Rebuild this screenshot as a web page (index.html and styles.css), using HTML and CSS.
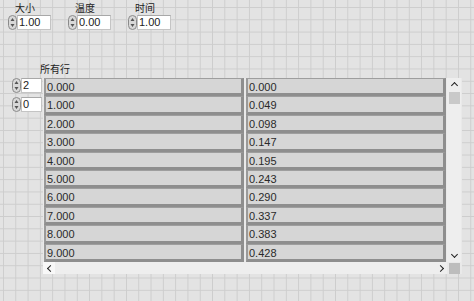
FILE: index.html
```html
<!DOCTYPE html>
<html lang="zh">
<head>
    <meta charset="UTF-8">
    <title>前面板</title>
    <link rel="stylesheet" href="styles.css">
</head>
<body>
<div class="panel">
    <div class="top">
        <div class="ctrl">
            <div class="label">大小</div>
            <div class="num"><span class="spin"><svg width="9" height="15" viewBox="0 0 9 15"><rect x="0.5" y="0.5" width="8" height="14" rx="4" fill="#d8d8d8" stroke="#8a8a8a"/><path d="M2.5 6 L4.5 3 L6.5 6 Z M2.5 9 L4.5 12 L6.5 9 Z" fill="#555"/></svg></span><span class="box">1.00</span></div>
        </div>
        <div class="ctrl">
            <div class="label">温度</div>
            <div class="num"><span class="spin"><svg width="9" height="15" viewBox="0 0 9 15"><rect x="0.5" y="0.5" width="8" height="14" rx="4" fill="#d8d8d8" stroke="#8a8a8a"/><path d="M2.5 6 L4.5 3 L6.5 6 Z M2.5 9 L4.5 12 L6.5 9 Z" fill="#555"/></svg></span><span class="box">0.00</span></div>
        </div>
        <div class="ctrl">
            <div class="label">时间</div>
            <div class="num"><span class="spin"><svg width="9" height="15" viewBox="0 0 9 15"><rect x="0.5" y="0.5" width="8" height="14" rx="4" fill="#d8d8d8" stroke="#8a8a8a"/><path d="M2.5 6 L4.5 3 L6.5 6 Z M2.5 9 L4.5 12 L6.5 9 Z" fill="#555"/></svg></span><span class="box">1.00</span></div>
        </div>
    </div>

    <div class="array-label">所有行</div>
    <div class="array">
        <div class="index">
            <div class="num"><span class="spin"><svg width="9" height="15" viewBox="0 0 9 15"><rect x="0.5" y="0.5" width="8" height="14" rx="4" fill="#d8d8d8" stroke="#8a8a8a"/><path d="M2.5 6 L4.5 3 L6.5 6 Z M2.5 9 L4.5 12 L6.5 9 Z" fill="#555"/></svg></span><span class="box small">2</span></div>
            <div class="num"><span class="spin"><svg width="9" height="15" viewBox="0 0 9 15"><rect x="0.5" y="0.5" width="8" height="14" rx="4" fill="#d8d8d8" stroke="#8a8a8a"/><path d="M2.5 6 L4.5 3 L6.5 6 Z M2.5 9 L4.5 12 L6.5 9 Z" fill="#555"/></svg></span><span class="box small">0</span></div>
        </div>
        <div class="table">
            <div class="cells">
                <div class="cell">0.000</div><div class="cell">0.000</div>
                <div class="cell">1.000</div><div class="cell">0.049</div>
                <div class="cell">2.000</div><div class="cell">0.098</div>
                <div class="cell">3.000</div><div class="cell">0.147</div>
                <div class="cell">4.000</div><div class="cell">0.195</div>
                <div class="cell">5.000</div><div class="cell">0.243</div>
                <div class="cell">6.000</div><div class="cell">0.290</div>
                <div class="cell">7.000</div><div class="cell">0.337</div>
                <div class="cell">8.000</div><div class="cell">0.383</div>
                <div class="cell">9.000</div><div class="cell">0.428</div>
            </div>
            <div class="vscroll">
                <span class="chev up"></span>
                <span class="thumb"></span>
                <span class="fill"></span>
                <span class="chev down"></span>
            </div>
            <div class="hscroll">
                <span class="harrow left"><span class="chev lt"></span></span>
                <span class="fill"></span>
                <span class="harrow"><span class="chev rt"></span></span>
            </div>
            <div class="corner"></div>
        </div>
    </div>
</div>
</body>
</html>
```

FILE: styles.css
```css
body { margin: 0; font-family: "Liberation Sans", Arial, "Noto Sans CJK SC", sans-serif; font-size: 11px; color: #222; }
.panel {
    width: 474px; height: 301px; box-sizing: border-box;
    background-color: #e3e3e3;
    background-image:
        linear-gradient(to right, #cdcdcd 1px, transparent 1px),
        linear-gradient(to bottom, #cdcdcd 1px, transparent 1px);
    background-size: 12.3px 12.3px;
    background-position: 3px 7px;
    padding: 2px 0 0 8px;
}

.top { display: flex; gap: 17px; }
.ctrl { width: 43px; }
.label { font-family: "Noto Sans CJK SC", sans-serif; font-size: 10px; line-height: 12px; height: 13px; padding-left: 7px; color: #222; }
.num { display: flex; align-items: center; }
.spin { width: 9px; height: 15px; display: block; }
.spin svg { display: block; }
.box {
    width: 34px; height: 15px; box-sizing: border-box;
    background: #fff; border: 1px solid #c4c4c4; border-top-color: #a8a8a8;
    padding-left: 1px; line-height: 13px; font-size: 11px;
}
.box.small { width: 21px; }

.array-label { font-family: "Noto Sans CJK SC", sans-serif; font-size: 10px; line-height: 12px; margin: 33px 0 0 32px; height: 13px; }
.array { display: flex; margin-top: 2px; margin-left: 4px; }
.index { display: flex; flex-direction: column; gap: 4px; width: 31px; }

.table {
    display: grid;
    grid-template-columns: 404px 14px;
    grid-template-rows: 184px 12px;
    background: #e9e9e9;
    width: 419px;
}
.cells {
    display: grid;
    grid-template-columns: 200px 200px;
    grid-template-rows: repeat(10, 18.4px);
    column-gap: 2px;
    padding: 0 0 0 1px;
}
.cell {
    box-sizing: border-box;
    background: #d6d6d6;
    border-top: 1px solid #9e9e9e;
    border-left: 2px solid #9a9a9a;
    border-bottom: 3px solid #8e8e8e;
    border-right: 3px solid #8e8e8e;
    padding: 1px 0 0 1px;
    line-height: 14px;
    font-size: 11px;
    color: #2a2a2a;
}
.chev {
    display: block; flex: none;
    width: 4px; height: 4px;
    border-top: 1.5px solid #222; border-left: 1.5px solid #222;
}
.chev.up { transform: rotate(45deg); margin-top: 5px; }
.chev.down { transform: rotate(225deg); margin-bottom: 5px; }
.chev.lt { transform: rotate(-45deg); margin-left: 2px; }
.chev.rt { transform: rotate(135deg); margin-right: 2px; }
.vscroll { display: flex; flex-direction: column; align-items: center; background: #eeeeee; padding: 0 0 0 1px; }
.vscroll .thumb { width: 11px; height: 12px; background: #c9c9c9; margin-top: 4px; }
.vscroll .fill { flex: 1; }
.hscroll { display: flex; align-items: center; background: #eeeeee; }
.hscroll .fill { flex: 1; }
.harrow { width: 12px; height: 12px; display: flex; align-items: center; justify-content: center; }
.harrow.left { background: #f8f8f8; }
.corner { background: #bdbdbd; margin: 1px 1px 0 2px; }
```
